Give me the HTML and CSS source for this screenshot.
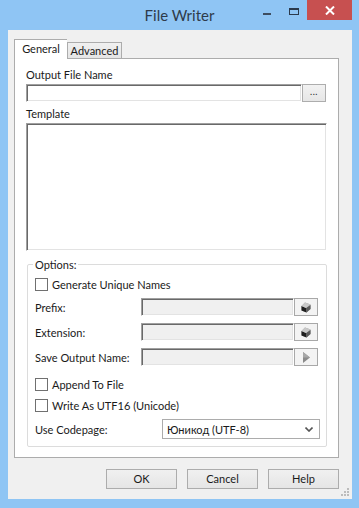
FILE: index.html
```html
<!DOCTYPE html>
<html>
<head>
<meta charset="utf-8">
<title>File Writer</title>
<link rel="stylesheet" href="styles.css">
</head>
<body>
<div class="window">
  <div class="titlebar">
    <div class="spacer"></div>
    <div class="title">File Writer</div>
    <div class="controls">
      <div class="ctl min"><span class="min-glyph"></span></div>
      <div class="ctl max"><span class="max-glyph"></span></div>
      <div class="ctl close">
        <svg width="10" height="9" viewBox="0 0 10 9"><path d="M1 0.5 L9 8.5 M9 0.5 L1 8.5" stroke="#fff" stroke-width="2" fill="none"/></svg>
      </div>
    </div>
  </div>
  <div class="client">
    <div class="tabs">
      <div class="tab active">General</div>
      <div class="tab">Advanced</div>
    </div>
    <div class="panel">
      <div class="lbl lbl-first">Output File Name</div>
      <div class="file-row">
        <div class="edit file-edit"></div>
        <div class="browse">...</div>
      </div>
      <div class="lbl lbl-second">Template</div>
      <div class="edit memo"></div>
      <div class="group">
        <div class="legend">Options:</div>
        <div class="chk chk-first"><span class="box"></span><span>Generate Unique Names</span></div>
        <div class="frow frow-first">
          <span class="flbl">Prefix:</span>
          <div class="edit fedit"></div>
          <div class="fbtn">
            <svg width="10" height="11" viewBox="0 0 10 11"><path d="M4 0.5 L9.5 2.5 L9.5 7 L5.5 10.5 L0.5 8.5 L0.5 4 Z" fill="#9a9a9a"/><path d="M0.5 4 L5 6 L5.5 10.5 L0.5 8.5 Z" fill="#1e1e1e"/><path d="M5 6 L9.5 3 L9.5 7 L5.5 10.5 Z" fill="#5a5a5a"/><path d="M4 0.5 L9.5 2.5 L5 6 L0.5 4 Z" fill="#c8c8c8"/></svg>
          </div>
        </div>
        <div class="frow">
          <span class="flbl">Extension:</span>
          <div class="edit fedit"></div>
          <div class="fbtn">
            <svg width="10" height="11" viewBox="0 0 10 11"><path d="M4 0.5 L9.5 2.5 L9.5 7 L5.5 10.5 L0.5 8.5 L0.5 4 Z" fill="#9a9a9a"/><path d="M0.5 4 L5 6 L5.5 10.5 L0.5 8.5 Z" fill="#1e1e1e"/><path d="M5 6 L9.5 3 L9.5 7 L5.5 10.5 Z" fill="#5a5a5a"/><path d="M4 0.5 L9.5 2.5 L5 6 L0.5 4 Z" fill="#c8c8c8"/></svg>
          </div>
        </div>
        <div class="frow">
          <span class="flbl">Save Output Name:</span>
          <div class="edit fedit"></div>
          <div class="fbtn">
            <svg width="7" height="11" viewBox="0 0 7 11"><path d="M0 0 L7 5.5 L0 11 Z" fill="#8a8a8a"/><path d="M0 0 L7 5.5 L0 5.5 Z" fill="#a8a8a8"/></svg>
          </div>
        </div>
        <div class="chk chk-append"><span class="box"></span><span>Append To File</span></div>
        <div class="chk chk-utf"><span class="box"></span><span>Write As UTF16 (Unicode)</span></div>
        <div class="cp-row">
          <span class="cp-lbl">Use Codepage:</span>
          <div class="combo">
            <span class="combo-text">Юникод (UTF-8)</span>
            <svg width="8" height="5" viewBox="0 0 8 5"><path d="M0.5 0.5 L4 4 L7.5 0.5" stroke="#555" stroke-width="1.6" fill="none"/></svg>
          </div>
        </div>
      </div>
    </div>
    <div class="buttons">
      <div class="btn">OK</div>
      <div class="btn">Cancel</div>
      <div class="btn">Help</div>
    </div>
    <svg class="grip" width="9" height="9" viewBox="0 0 9 9">
      <rect x="6" y="0" width="2" height="2" fill="#bcbcbc"/>
      <rect x="3" y="3" width="2" height="2" fill="#bcbcbc"/>
      <rect x="6" y="3" width="2" height="2" fill="#bcbcbc"/>
      <rect x="0" y="6" width="2" height="2" fill="#bcbcbc"/>
      <rect x="3" y="6" width="2" height="2" fill="#bcbcbc"/>
      <rect x="6" y="6" width="2" height="2" fill="#bcbcbc"/>
    </svg>
  </div>
</div>
</body>
</html>
```
FILE: styles.css
```css
* { box-sizing: border-box; }
html, body { margin: 0; padding: 0; }
body {
  width: 359px;
  height: 508px;
  background: #8fc5f4;
  font-family: Lato, "Noto Sans", sans-serif;
  font-size: 11px;
  color: #1a1a1a;
  overflow: hidden;
}
.window { width: 359px; height: 508px; display: flex; flex-direction: column; }

.titlebar {
  height: 30px;
  display: grid;
  grid-template-columns: 1fr auto 1fr;
  align-items: start;
}
.title {
  padding-top: 6px;
  font-size: 15px;
  color: #2e3b4a;
  line-height: 18px;
}
.controls { justify-self: end; display: flex; margin-right: 7px; }
.ctl { height: 20px; display: flex; justify-content: center; }
.min { width: 26px; padding-top: 13px; }
.min-glyph { width: 8px; height: 2px; background: #3d4d60; }
.max { width: 27px; padding-top: 8px; }
.max-glyph { width: 10px; height: 7px; border: 1px solid #2b3a4c; border-top-width: 2px; }
.close { width: 45px; background: #c75050; align-items: center; }

.client {
  position: relative;
  margin: 0 7px 0 8px;
  height: 469px;
  background: #f0f0f0;
  padding: 9px 0 0 6px;
}
.tabs { display: flex; align-items: flex-end; height: 19px; }
.tab {
  height: 16px;
  border: 1px solid #acacac;
  border-bottom: none;
  background: linear-gradient(#f0f0f0, #e5e5e5);
  line-height: 15px;
  width: 55px;
  text-align: center;
}
.tab.active {
  height: 20px;
  margin-bottom: -1px;
  width: 53px;
  background: #fff;
  position: relative;
  z-index: 1;
  line-height: 17px;
  border-right: none;
}
.panel {
  width: 325px;
  height: 400px;
  background: #fff;
  border: 1px solid #acacac;
  padding-left: 11px;
}
.lbl { height: 15px; line-height: 15px; }
.lbl-first { margin-top: 8px; }
.lbl-second { margin-top: 4px; }
.file-row { display: flex; margin-top: 2px; height: 18px; }
.edit {
  background: #fff;
  border-top: 1px solid #a0a0a0;
  border-left: 1px solid #a0a0a0;
  border-bottom: 1px solid #fff;
  border-right: 1px solid #fff;
  box-shadow: inset 1px 1px 0 #696969, inset -1px -1px 0 #e3e3e3;
}
.file-edit { width: 276px; }
.browse {
  width: 24px;
  border: 1px solid #adadad;
  background: linear-gradient(#f2f2f2, #e6e6e6);
  text-align: center;
  font-size: 9px;
  line-height: 14px;
  letter-spacing: 0.5px;
}
.memo { width: 301px; height: 128px; margin-top: 2px; }

.group {
  margin: 13px 0 0 1px;
  width: 300px;
  height: 183px;
  border: 1px solid #dcdcdc;
  border-radius: 2px;
  padding-left: 7px;
}
.legend {
  display: block;
  width: max-content;
  height: 15px;
  line-height: 15px;
  margin: -8px 0 0 -2px;
  padding: 0 2px;
  background: #fff;
}
.chk { display: flex; align-items: center; height: 15px; gap: 4px; }
.box {
  width: 13px;
  height: 13px;
  border: 1px solid #707070;
  background: #fff;
}
.chk-first { margin-top: 5px; }
.chk-append { margin-top: 11px; }
.chk-utf { margin-top: 6px; }
.frow { display: flex; align-items: center; height: 18px; margin-top: 7px; }
.frow-first { margin-top: 6px; }
.flbl { width: 106px; }
.fedit { width: 153px; height: 18px; background: #f0f0f0; }
.fbtn {
  width: 24px;
  height: 18px;
  border: 1px solid #a8a8a8;
  background: #f3f3f3;
  display: flex;
  align-items: center;
  justify-content: center;
}
.cp-row { display: flex; align-items: center; height: 20px; margin-top: 6px; }
.cp-lbl { width: 127px; }
.combo {
  width: 158px;
  height: 20px;
  border: 1px solid #acacac;
  background: #fff;
  display: flex;
  align-items: center;
  justify-content: space-between;
  padding: 0 6px 0 4px;
}

.buttons {
  display: flex;
  justify-content: flex-end;
  gap: 10px;
  margin: 11px 13px 0 0;
}
.btn {
  width: 71px;
  height: 20px;
  border: 1px solid #acacac;
  background: linear-gradient(#f0f0f0, #e5e5e5);
  text-align: center;
  line-height: 18px;
}
.grip { position: absolute; right: 2px; bottom: 2px; }
```
